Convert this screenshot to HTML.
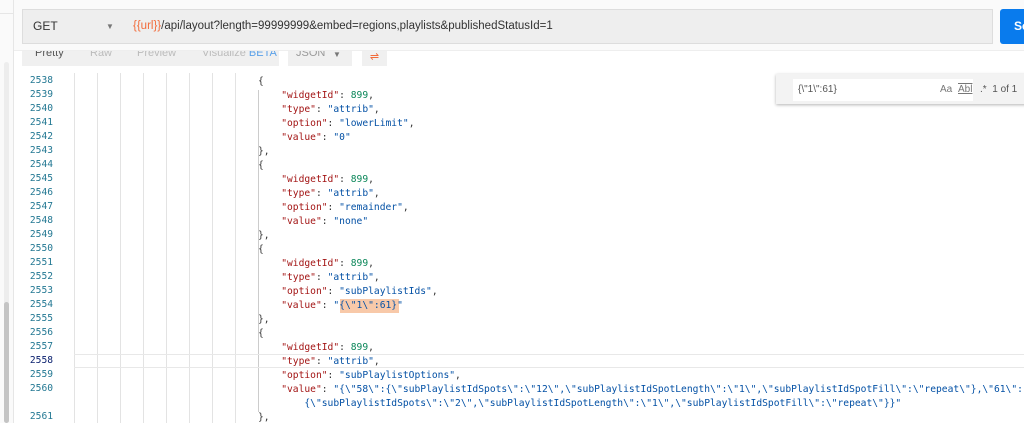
<!DOCTYPE html><html><head><style>
body{margin:0;width:1024px;height:423px;overflow:hidden;background:#fff;font-family:"Liberation Sans",sans-serif;position:relative}
.a{position:absolute}
.code{font-family:"DejaVu Sans Mono","Liberation Mono",monospace;font-size:9.65px;white-space:pre;line-height:14px;color:#333}
.k{color:#a31515}.s{color:#0451a5}.n{color:#098658}
.ln{position:absolute;left:20px;width:33px;text-align:right;font-family:"DejaVu Sans Mono",monospace;font-size:9.6px;color:#237893}
.g{position:absolute;top:73px;height:350px;width:1px;background:#e3e3e3}
</style></head><body>
<div class="a" style="left:0;top:0;width:13px;height:423px;background:#fafafa;border-right:1px solid #e6e6e6"></div>
<div class="a" style="left:0;top:13px;width:13px;height:1px;background:#e6e6e6"></div>
<div class="a" style="left:4px;top:62px;width:5px;height:361px;background:#ededed;border-radius:3px"></div>
<div class="a" style="left:4px;top:302px;width:5px;height:121px;background:#c4c4c4;border-radius:3px"></div>
<div class="a" style="left:14px;top:0;width:1010px;height:50px;background:#fafafa;border-bottom:1px solid #eee"></div>
<div class="a" style="left:22px;top:9px;width:101px;height:33px;background:#eee;border:1px solid #ddd;border-right:1px solid #d8d8d8;font-size:12px;line-height:33px;color:#333"><span style="margin-left:10px">GET</span><span style="position:absolute;left:83px;top:0;font-size:8px;color:#777">▼</span></div>
<div class="a" style="left:124px;top:9px;width:868px;height:33px;background:#eee;border:1px solid #ddd;border-left:none;font-size:11.5px;line-height:33px;color:#333"><span style="margin-left:9px;color:#f26b3a">{{url}}</span>/api/layout?length=99999999&amp;embed=regions,playlists&amp;publishedStatusId=1</div>
<div class="a" style="left:1000px;top:9px;width:30px;height:35px;background:#097bed;border-radius:3px;color:#fff;font-weight:bold;font-size:12px;line-height:35px;padding-left:14px">Se</div>
<div class="a" style="left:22px;top:51px;width:257px;height:15px;background:#f0f0f0;font-size:11px;color:#bbb;overflow:hidden"><span style="position:absolute;left:13px;top:-4px;color:#555">Pretty</span><span style="position:absolute;left:68px;top:-4px">Raw</span><span style="position:absolute;left:115px;top:-4px">Preview</span><span style="position:absolute;left:180px;top:-4px">Visualize <span style="color:#5aa0e8">BETA</span></span></div>
<div class="a" style="left:288px;top:51px;width:64px;height:15px;background:#f0f0f0;font-size:11px;color:#999;overflow:hidden"><span style="position:absolute;left:8px;top:-4px">JSON</span><span style="position:absolute;left:45px;top:-1px;font-size:8px;color:#777">▼</span></div>
<div class="a" style="left:362px;top:51px;width:25px;height:15px;background:#f0f0f0;color:#f26b3a;font-size:11px;text-align:center;line-height:12px">⇌</div>
<div class="a" style="left:22px;top:66px;width:1002px;height:6px;background:#fff"></div>
<div class="g" style="left:74px"></div><div class="g" style="left:97px"></div><div class="g" style="left:120px"></div><div class="g" style="left:143px"></div><div class="g" style="left:166px"></div><div class="g" style="left:189px"></div><div class="g" style="left:212px"></div><div class="g" style="left:235px"></div>
<div class="a" style="left:258px;top:90px;width:1px;height:322px;background:#ccc"></div>
<div class="a" style="left:74px;top:354px;width:950px;height:14px;border-top:1px solid #e8e8e8;border-bottom:1px solid #e8e8e8;box-sizing:border-box"></div>
<div class="a" style="left:340px;top:299px;width:59px;height:14px;background:#f8c9a9"></div>
<div class="ln" style="top:74px;line-height:14px">2538<br>2539<br>2540<br>2541<br>2542<br>2543<br>2544<br>2545<br>2546<br>2547<br>2548<br>2549<br>2550<br>2551<br>2552<br>2553<br>2554<br>2555<br>2556<br>2557<br><span style="color:#0b216f">2558</span><br>2559<br>2560<br><br>2561</div>
<div class="a code" style="left:258px;top:75px">{
    <span class="k">"widgetId"</span>: <span class="n">899</span>,
    <span class="k">"type"</span>: <span class="s">"attrib"</span>,
    <span class="k">"option"</span>: <span class="s">"lowerLimit"</span>,
    <span class="k">"value"</span>: <span class="s">"0"</span>
},
{
    <span class="k">"widgetId"</span>: <span class="n">899</span>,
    <span class="k">"type"</span>: <span class="s">"attrib"</span>,
    <span class="k">"option"</span>: <span class="s">"remainder"</span>,
    <span class="k">"value"</span>: <span class="s">"none"</span>
},
{
    <span class="k">"widgetId"</span>: <span class="n">899</span>,
    <span class="k">"type"</span>: <span class="s">"attrib"</span>,
    <span class="k">"option"</span>: <span class="s">"subPlaylistIds"</span>,
    <span class="k">"value"</span>: <span class="s">"{\"1\":61}"</span>
},
{
    <span class="k">"widgetId"</span>: <span class="n">899</span>,
    <span class="k">"type"</span>: <span class="s">"attrib"</span>,
    <span class="k">"option"</span>: <span class="s">"subPlaylistOptions"</span>,
    <span class="k">"value"</span>: <span class="s">"{\"58\":{\"subPlaylistIdSpots\":\"12\",\"subPlaylistIdSpotLength\":\"1\",\"subPlaylistIdSpotFill\":\"repeat\"},\"61\":</span>
<span class="s">        {\"subPlaylistIdSpots\":\"2\",\"subPlaylistIdSpotLength\":\"1\",\"subPlaylistIdSpotFill\":\"repeat\"}}"</span>
},</div>
<div class="a" style="left:776px;top:74px;width:260px;height:30px;background:#f3f3f3;box-shadow:0 1px 3px rgba(0,0,0,.3)"></div>
<div class="a" style="left:793px;top:79px;width:180px;height:22px;background:#fff;font-size:10px;line-height:22px;color:#555"><span style="margin-left:5px">{\"1\":61}</span><span style="position:absolute;left:147px;color:#777">Aa</span><span style="position:absolute;left:165px;color:#777;text-decoration:underline overline">Abl</span></div>
<div class="a" style="left:980px;top:79px;font-size:10px;line-height:22px;color:#555">.* &nbsp;1 of 1</div>
</body></html>
